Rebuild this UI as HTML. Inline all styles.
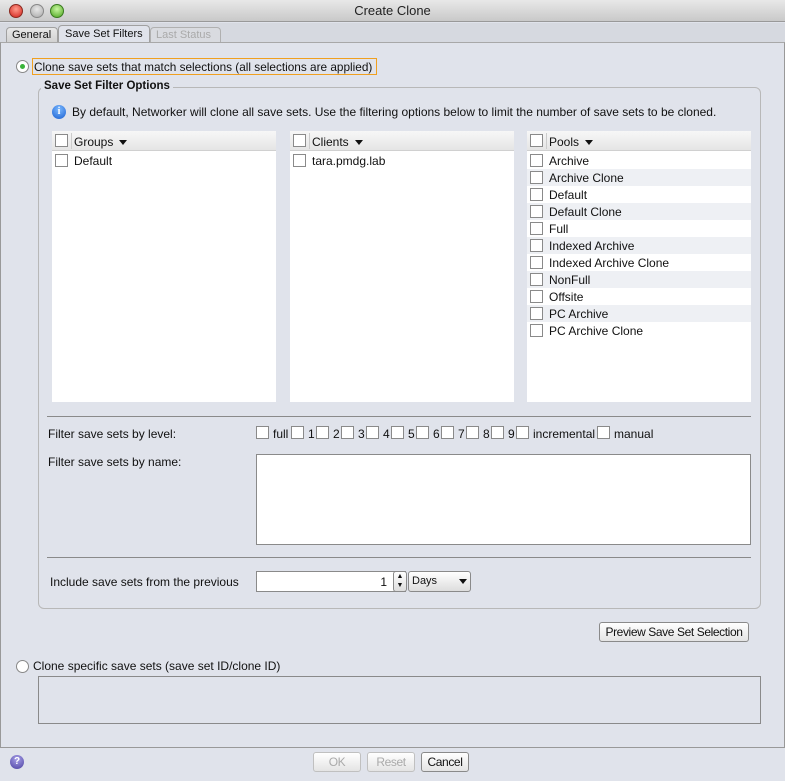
<!DOCTYPE html>
<html><head><style>
*{box-sizing:border-box;margin:0;padding:0}
body{width:785px;height:781px;background:#e0e3eb;font-family:"Liberation Sans",sans-serif;font-size:12px;color:#111;position:relative;overflow:hidden;white-space:nowrap}
.a{position:absolute}
.cb{position:absolute;width:13px;height:13px;border:1px solid #8a8a8a;background:#fff}
.list{position:absolute;background:#fff;top:131px;height:271px}
.hdr{position:absolute;left:0;right:0;top:0;height:20px;background:linear-gradient(#f7f7f7,#e5e5e5);border-bottom:1px solid #d0d0d0}
.row{position:absolute;left:0;right:0;height:17px}
.row.alt{background:#eef0f4}
.row span{position:absolute;left:22px;top:2px}
.row .cb{left:3px;top:2px}
.btn{position:absolute;height:20px;border:1px solid #8a8a8a;border-radius:3px;background:linear-gradient(#fff,#e4e4e4);text-align:center;line-height:18px;font-size:12px;letter-spacing:-0.4px}
.tri{display:inline-block;width:0;height:0;border-left:4px solid transparent;border-right:4px solid transparent;border-top:5px solid #111;vertical-align:middle;margin-left:6px}
</style></head><body>
<div class="a" style="left:0;top:0;width:785px;height:22px;background:linear-gradient(#e8e8e8,#c9c9c9);border-bottom:1px solid #999"></div>
<div class="a" style="left:9px;top:4px;width:14px;height:14px;border-radius:50%;background:radial-gradient(circle at 50% 35%,#ff9a8a,#d0201a);border:1px solid #8a2a20"></div>
<div class="a" style="left:30px;top:4px;width:14px;height:14px;border-radius:50%;background:radial-gradient(circle at 50% 35%,#e8e8e8,#a8a8a8);border:1px solid #888"></div>
<div class="a" style="left:50px;top:4px;width:14px;height:14px;border-radius:50%;background:radial-gradient(circle at 50% 35%,#c8f7a0,#4ca41e);border:1px solid #3a7a20"></div>
<div class="a" style="left:0;width:785px;top:3px;text-align:center;font-size:13px;color:#222">Create Clone</div>
<div class="a" style="left:0;top:23px;width:785px;height:20px;background:#d6d9e0"></div>
<div class="a" style="left:6px;top:27px;width:52px;height:16px;border:1px solid #a0a0a0;border-bottom:none;border-radius:4px 4px 0 0;background:linear-gradient(#e8e8e8,#d0d0d0);padding:1px 0 0 5px;font-size:11px">General</div>
<div class="a" style="left:58px;top:25px;width:92px;height:18px;border:1px solid #a0a0a0;border-bottom:none;border-radius:4px 4px 0 0;background:#e0e3eb;padding:2px 0 0 6px;font-size:11px">Save Set Filters</div>
<div class="a" style="left:150px;top:27px;width:71px;height:16px;border:1px solid #b0b0b0;border-bottom:none;border-radius:4px 4px 0 0;background:#d9dbe0;color:#aaa;padding:1px 0 0 5px;font-size:11px">Last Status</div>
<div class="a" style="left:0;top:42px;width:785px;height:706px;border:1px solid #999;border-top:1px solid #a8a8a8"></div>
<div class="a" style="left:16px;top:60px;width:13px;height:13px;border-radius:50%;border:1px solid #888;background:#fff"></div>
<div class="a" style="left:20px;top:64px;width:5px;height:5px;border-radius:50%;background:#3ab43a"></div>
<div class="a" style="left:32px;top:58px;width:345px;height:17px;border:1px solid #f0a020;padding:1px 0 0 1px;font-size:11.8px;overflow:hidden">Clone save sets that match selections (all selections are applied)</div>
<div class="a" style="left:38px;top:87px;width:723px;height:522px;border:1px solid #b8b8b8;border-radius:6px"></div>
<div class="a" style="left:41px;top:80px;background:#e0e3eb;padding:0 3px;font-weight:bold;font-size:11.5px">Save Set Filter Options</div>
<div class="a" style="left:52px;top:105px;width:14px;height:14px;border-radius:50%;background:radial-gradient(circle at 50% 30%,#7ab8ff,#1a5fd0);color:#fff;font-weight:bold;font-size:10px;text-align:center;line-height:14px;font-family:'Liberation Serif',serif">i</div>
<div class="a" style="left:72px;top:105px">By default, Networker will clone all save sets. Use the filtering options below to limit the number of save sets to be cloned.</div>
<div class="list" style="left:52px;width:224px"><div class="hdr"><div class="cb" style="left:3px;top:3px"></div><div class="a" style="left:19px;top:2px;width:1px;height:16px;background:#ccc"></div><span class="a" style="left:22px;top:4px">Groups<i class="tri"></i></span></div>
<div class="row" style="top:21px"><div class="cb"></div><span>Default</span></div></div>
<div class="list" style="left:290px;width:224px"><div class="hdr"><div class="cb" style="left:3px;top:3px"></div><div class="a" style="left:19px;top:2px;width:1px;height:16px;background:#ccc"></div><span class="a" style="left:22px;top:4px">Clients<i class="tri"></i></span></div>
<div class="row" style="top:21px"><div class="cb"></div><span>tara.pmdg.lab</span></div></div>
<div class="list" style="left:527px;width:224px"><div class="hdr"><div class="cb" style="left:3px;top:3px"></div><div class="a" style="left:19px;top:2px;width:1px;height:16px;background:#ccc"></div><span class="a" style="left:22px;top:4px">Pools<i class="tri"></i></span></div>
<div class="row" style="top:21px"><div class="cb"></div><span>Archive</span></div>
<div class="row alt" style="top:38px"><div class="cb"></div><span>Archive Clone</span></div>
<div class="row" style="top:55px"><div class="cb"></div><span>Default</span></div>
<div class="row alt" style="top:72px"><div class="cb"></div><span>Default Clone</span></div>
<div class="row" style="top:89px"><div class="cb"></div><span>Full</span></div>
<div class="row alt" style="top:106px"><div class="cb"></div><span>Indexed Archive</span></div>
<div class="row" style="top:123px"><div class="cb"></div><span>Indexed Archive Clone</span></div>
<div class="row alt" style="top:140px"><div class="cb"></div><span>NonFull</span></div>
<div class="row" style="top:157px"><div class="cb"></div><span>Offsite</span></div>
<div class="row alt" style="top:174px"><div class="cb"></div><span>PC Archive</span></div>
<div class="row" style="top:191px"><div class="cb"></div><span>PC Archive Clone</span></div></div>
<div class="a" style="left:47px;top:416px;width:704px;height:1px;background:#8a8a8a"></div>
<div class="a" style="left:47px;top:557px;width:704px;height:1px;background:#8a8a8a"></div>
<div class="a" style="left:48px;top:427px">Filter save sets by level:</div>
<div class="a" style="left:48px;top:455px">Filter save sets by name:</div>
<div class="a" style="left:50px;top:575px">Include save sets from the previous</div>
<div class="cb" style="left:256px;top:426px"></div><div class="a" style="left:273px;top:427px">full</div>
<div class="cb" style="left:291px;top:426px"></div><div class="a" style="left:308px;top:427px">1</div>
<div class="cb" style="left:316px;top:426px"></div><div class="a" style="left:333px;top:427px">2</div>
<div class="cb" style="left:341px;top:426px"></div><div class="a" style="left:358px;top:427px">3</div>
<div class="cb" style="left:366px;top:426px"></div><div class="a" style="left:383px;top:427px">4</div>
<div class="cb" style="left:391px;top:426px"></div><div class="a" style="left:408px;top:427px">5</div>
<div class="cb" style="left:416px;top:426px"></div><div class="a" style="left:433px;top:427px">6</div>
<div class="cb" style="left:441px;top:426px"></div><div class="a" style="left:458px;top:427px">7</div>
<div class="cb" style="left:466px;top:426px"></div><div class="a" style="left:483px;top:427px">8</div>
<div class="cb" style="left:491px;top:426px"></div><div class="a" style="left:508px;top:427px">9</div>
<div class="cb" style="left:516px;top:426px"></div><div class="a" style="left:533px;top:427px">incremental</div>
<div class="cb" style="left:597px;top:426px"></div><div class="a" style="left:614px;top:427px">manual</div>
<div class="a" style="left:256px;top:454px;width:495px;height:91px;background:#fff;border:1px solid #8a8a8a"></div>
<div class="a" style="left:256px;top:571px;width:150px;height:21px;background:#fff;border:1px solid #8a8a8a;text-align:right;padding:3px 18px 0 0">1</div>
<div class="a" style="left:393px;top:571px;width:14px;height:21px;border:1px solid #8a8a8a;border-radius:3px;background:linear-gradient(#fff,#ddd);font-size:7px;line-height:9px;text-align:center">▲<br>▼</div>
<div class="a" style="left:408px;top:571px;width:63px;height:21px;border:1px solid #8a8a8a;border-radius:3px;background:linear-gradient(#fff,#ddd);padding:3px 0 0 3px;font-size:11px">Days<i class="tri" style="margin-left:22px"></i></div>
<div class="btn" style="left:599px;top:622px;width:150px">Preview Save Set Selection</div>
<div class="a" style="left:16px;top:660px;width:13px;height:13px;border-radius:50%;border:1px solid #888;background:#fff"></div>
<div class="a" style="left:33px;top:659px">Clone specific save sets (save set ID/clone ID)</div>
<div class="a" style="left:38px;top:676px;width:723px;height:48px;border:1px solid #8a8a8a"></div>
<div class="a" style="left:10px;top:755px;width:14px;height:14px;border-radius:50%;background:radial-gradient(circle at 50% 30%,#a8a0e8,#4a3fa0);color:#fff;font-size:10px;font-weight:bold;text-align:center;line-height:14px">?</div>
<div class="btn" style="left:313px;top:752px;width:48px;color:#aaa;border-color:#c0c0c0">OK</div>
<div class="btn" style="left:367px;top:752px;width:48px;color:#aaa;border-color:#c0c0c0">Reset</div>
<div class="btn" style="left:421px;top:752px;width:48px">Cancel</div>
</body></html>
